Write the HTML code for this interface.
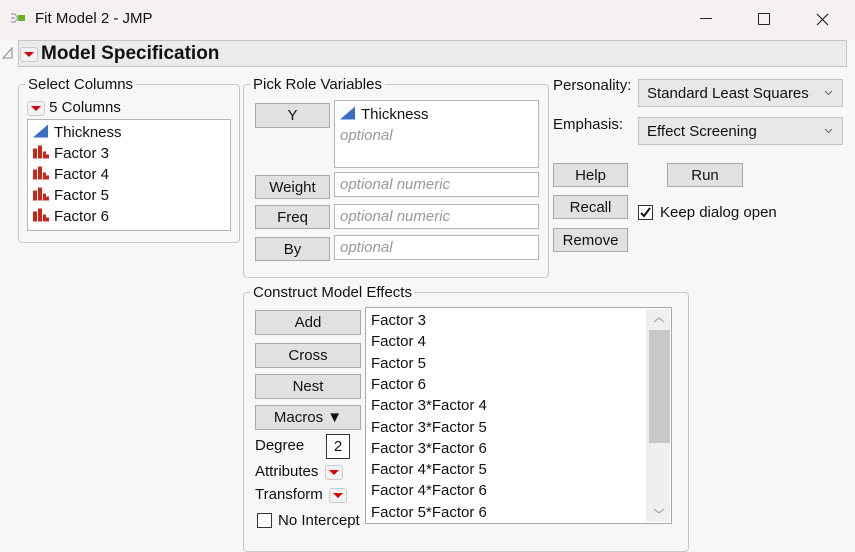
<!DOCTYPE html><html><head><style>
*{box-sizing:border-box;margin:0;padding:0}
body{width:855px;height:545px;overflow:hidden;background:#f7f7f7;font-family:"Liberation Sans",sans-serif;font-size:15px;color:#111;position:relative}
.a{position:absolute}
.btn{position:absolute;background:#e1e1e1;border:1px solid #a9a9a9;text-align:center;font-size:15px;line-height:24px}
.grp{position:absolute;border:1px solid #c8c8c8;border-radius:4px}
.lbl{position:absolute;background:#f7f7f7;padding:0 3px;font-size:15px}
.fld{position:absolute;background:#fff;border:1px solid #b5b5b5;font-style:italic;color:#999;padding-left:5px;line-height:24px}
.dd{display:inline-block;width:18px;height:15px;border:1px solid #c9c9c9;border-radius:3px;background:#f2f2f2;position:relative;vertical-align:middle}
.dd:after{content:"";position:absolute;left:3px;top:4px;border-left:5px solid transparent;border-right:5px solid transparent;border-top:5px solid #d00}
.bar{display:inline-block;width:16px;height:14px;vertical-align:-1px;margin-right:5px}
.row{position:absolute;left:5px;height:21px;line-height:21px}
</style></head><body>
<div class="a" style="left:0;top:0;width:855px;height:40px;background:#f7f0f0"></div>
<svg class="a" style="left:10px;top:11px" width="16" height="14"><path d="M1 3h4M1 7h4M1 11h4M5 3l3 4-3 4" stroke="#7a8aa0" fill="none"/><rect x="8" y="4" width="7" height="6" fill="#6ab023"/></svg>
<div class="a" style="left:35px;top:10px;font-size:15px">Fit Model 2 - JMP</div>
<div class="a" style="left:700px;top:18px;width:12px;border-top:1px solid #222"></div>
<div class="a" style="left:758px;top:13px;width:12px;height:12px;border:1px solid #222;border-radius:1px"></div>
<svg class="a" style="left:816px;top:13px" width="13" height="13"><path d="M1 1L12 12M12 1L1 12" stroke="#222" stroke-width="1.2"/></svg>
<svg class="a" style="left:2px;top:46px" width="12" height="14"><path d="M10 2V12H1Z" fill="none" stroke="#888"/></svg>
<div class="a" style="left:18px;top:40px;width:829px;height:27px;background:#ebebeb;border:1px solid #c4c4c4"></div>
<div class="a" style="left:20px;top:45px"><span class="dd"></span></div>
<div class="a" style="left:41px;top:43px;font-size:19px;font-weight:bold">Model Specification</div>

<div class="grp" style="left:18px;top:84px;width:222px;height:159px"></div>
<div class="lbl" style="left:25px;top:76px">Select Columns</div>
<div class="a" style="left:27px;top:99px"><span class="dd"></span> 5 Columns</div>
<div class="a" style="left:27px;top:119px;width:204px;height:112px;background:#fff;border:1px solid #b5b5b5">
<div class="row" style="top:2px"><svg class="bar" viewBox="0 0 16 13"><path d="M0 13L15 0V13Z" fill="#3a6fc4"/></svg>Thickness</div>
<div class="row" style="top:23px"><svg class="bar" viewBox="0 0 16 13"><path d="M0 3h4v10H0zM5 0h4v13H5zM10 6h3v7h-3zM13 9h3v4h-3z" fill="#c8281c"/></svg>Factor 3</div>
<div class="row" style="top:44px"><svg class="bar" viewBox="0 0 16 13"><path d="M0 3h4v10H0zM5 0h4v13H5zM10 6h3v7h-3zM13 9h3v4h-3z" fill="#c8281c"/></svg>Factor 4</div>
<div class="row" style="top:65px"><svg class="bar" viewBox="0 0 16 13"><path d="M0 3h4v10H0zM5 0h4v13H5zM10 6h3v7h-3zM13 9h3v4h-3z" fill="#c8281c"/></svg>Factor 5</div>
<div class="row" style="top:86px"><svg class="bar" viewBox="0 0 16 13"><path d="M0 3h4v10H0zM5 0h4v13H5zM10 6h3v7h-3zM13 9h3v4h-3z" fill="#c8281c"/></svg>Factor 6</div>
</div>

<div class="grp" style="left:243px;top:84px;width:306px;height:194px"></div>
<div class="lbl" style="left:250px;top:76px">Pick Role Variables</div>
<div class="btn" style="left:255px;top:103px;width:75px;height:25px">Y</div>
<div class="btn" style="left:255px;top:175px;width:75px;height:24px">Weight</div>
<div class="btn" style="left:255px;top:205px;width:75px;height:24px">Freq</div>
<div class="btn" style="left:255px;top:237px;width:75px;height:24px">By</div>
<div class="a" style="left:334px;top:100px;width:205px;height:68px;background:#fff;border:1px solid #b5b5b5">
<div class="row" style="top:3px"><svg class="bar" viewBox="0 0 16 13"><path d="M0 13L15 0V13Z" fill="#3a6fc4"/></svg>Thickness</div>
<div class="row" style="top:24px;font-style:italic;color:#999">optional</div></div>
<div class="fld" style="left:334px;top:172px;width:205px;height:25px">optional numeric</div>
<div class="fld" style="left:334px;top:204px;width:205px;height:25px">optional numeric</div>
<div class="fld" style="left:334px;top:235px;width:205px;height:25px">optional</div>

<div class="a" style="left:553px;top:77px">Personality:</div>
<div class="a" style="left:553px;top:116px">Emphasis:</div>
<div class="a" style="left:638px;top:79px;width:205px;height:28px;background:#e8e8e8;border:1px solid #c4c4c4;padding:5px 8px">Standard Least Squares<svg style="position:absolute;right:9px;top:10px" width="9" height="6"><path d="M1 1l3.5 3.5L8 1" stroke="#666" fill="none"/></svg></div>
<div class="a" style="left:638px;top:117px;width:205px;height:28px;background:#e8e8e8;border:1px solid #c4c4c4;padding:5px 8px">Effect Screening<svg style="position:absolute;right:9px;top:10px" width="9" height="6"><path d="M1 1l3.5 3.5L8 1" stroke="#666" fill="none"/></svg></div>
<div class="btn" style="left:553px;top:163px;width:75px;height:24px">Help</div>
<div class="btn" style="left:667px;top:163px;width:76px;height:24px">Run</div>
<div class="btn" style="left:553px;top:195px;width:75px;height:24px">Recall</div>
<div class="btn" style="left:553px;top:228px;width:75px;height:24px">Remove</div>
<div class="a" style="left:638px;top:205px;width:15px;height:15px;border:1px solid #333;background:#fff"><svg width="13" height="13" style="position:absolute;left:0;top:0"><path d="M2 7l3 3 6-8" stroke="#111" stroke-width="2" fill="none"/></svg></div>
<div class="a" style="left:660px;top:204px">Keep dialog open</div>

<div class="grp" style="left:243px;top:292px;width:446px;height:260px"></div>
<div class="lbl" style="left:250px;top:284px">Construct Model Effects</div>
<div class="btn" style="left:255px;top:310px;width:106px;height:25px">Add</div>
<div class="btn" style="left:255px;top:343px;width:106px;height:25px">Cross</div>
<div class="btn" style="left:255px;top:374px;width:106px;height:25px">Nest</div>
<div class="btn" style="left:255px;top:405px;width:106px;height:25px">Macros &#9660;</div>
<div class="a" style="left:255px;top:437px">Degree</div>
<div class="a" style="left:326px;top:434px;width:24px;height:25px;background:#fff;border:1px solid #333;text-align:center;line-height:23px">2</div>
<div class="a" style="left:255px;top:463px">Attributes <span class="dd" style="margin-left:2px"></span></div>
<div class="a" style="left:255px;top:486px">Transform <span class="dd" style="margin-left:2px"></span></div>
<div class="a" style="left:257px;top:513px;width:15px;height:15px;border:1px solid #333;background:#fff"></div>
<div class="a" style="left:278px;top:512px">No Intercept</div>
<div class="a" style="left:365px;top:307px;width:307px;height:217px;background:#fff;border:1px solid #a8a8a8">
<div class="row" style="top:2px">Factor 3</div>
<div class="row" style="top:23.3px">Factor 4</div>
<div class="row" style="top:44.6px">Factor 5</div>
<div class="row" style="top:65.9px">Factor 6</div>
<div class="row" style="top:87.2px">Factor 3*Factor 4</div>
<div class="row" style="top:108.5px">Factor 3*Factor 5</div>
<div class="row" style="top:129.8px">Factor 3*Factor 6</div>
<div class="row" style="top:151.1px">Factor 4*Factor 5</div>
<div class="row" style="top:172.4px">Factor 4*Factor 6</div>
<div class="row" style="top:193.7px">Factor 5*Factor 6</div>
<div class="a" style="left:280px;top:1px;width:24px;height:213px;background:#efefef"></div>
<div class="a" style="left:283px;top:22px;width:21px;height:113px;background:#c8c8c8"></div>
<svg class="a" style="left:287px;top:8px" width="12" height="8"><path d="M1 6l5-4 5 4" stroke="#999" fill="none"/></svg>
<svg class="a" style="left:287px;top:199px" width="12" height="8"><path d="M1 2l5 4 5-4" stroke="#999" fill="none"/></svg>
</div>
</body></html>
